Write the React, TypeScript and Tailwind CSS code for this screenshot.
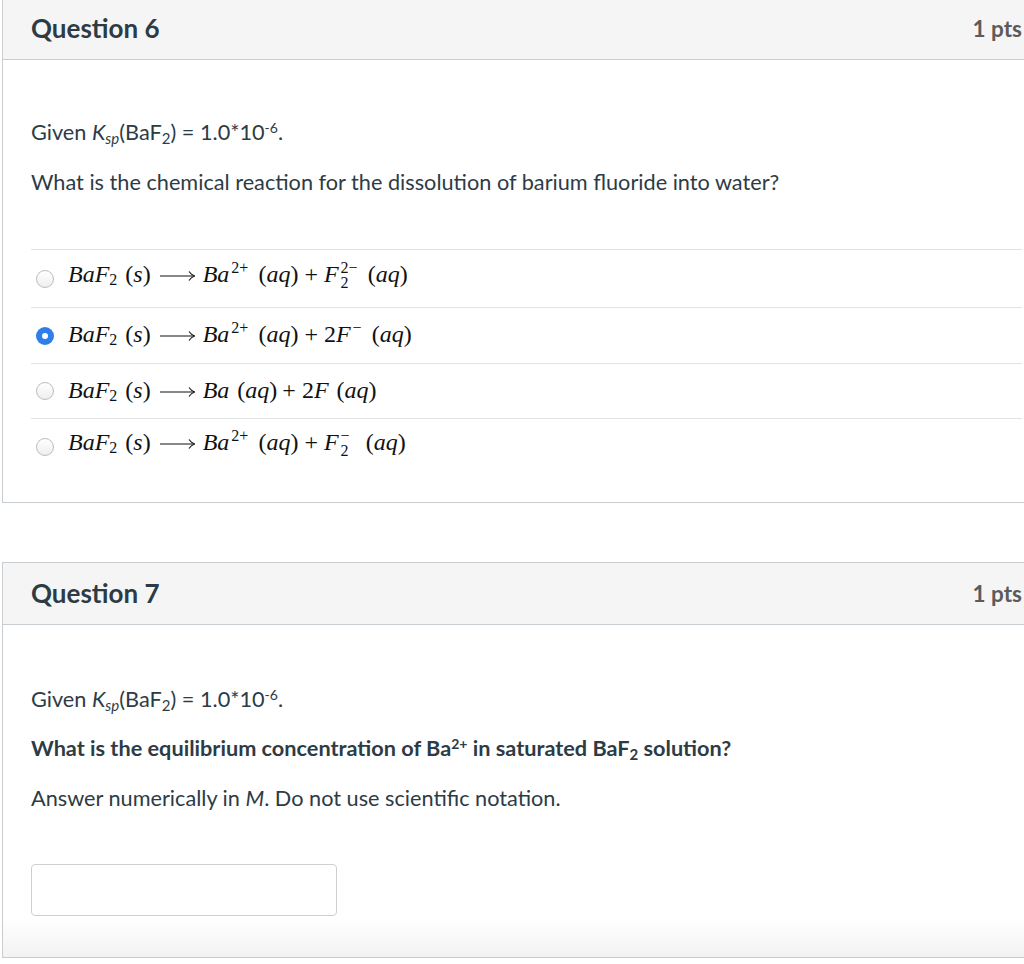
import { ReactNode } from 'react';

// quiz page: two question cards, one multiple choice and one numeric answer

const sans = "font-['Lato','Noto_Sans',sans-serif]";
const serif = "font-['Liberation_Serif','DejaVu_Serif',serif]";

function Radio({ checked }: { checked?: boolean }) {
	if (checked) {
		return (
			<span className="flex h-[18px] w-[18px] shrink-0 items-center justify-center rounded-full bg-[#2f7fe9]">
				<span className="h-[6px] w-[6px] rounded-full bg-white" />
			</span>
		);
	}
	return <span className="h-[18px] w-[18px] shrink-0 rounded-full border border-[#bdbdbd] bg-gradient-to-b from-white to-[#eeeeee]" />;
}

// long right arrow, as typeset math draws it
function Arrow({ className }: { className?: string }) {
	return (
		<svg width="35" height="12" viewBox="0 0 35 12" className={`inline-block align-middle ${className ?? ''}`}>
			<path d="M0 6H34" stroke="#111" strokeWidth="1.1" fill="none" />
			<path d="M29 1.5C30.5 3.8 32.2 5.2 35 6C32.2 6.8 30.5 8.2 29 10.5" stroke="#111" strokeWidth="1.1" fill="none" />
		</svg>
	);
}

const Sup = ({ children, className }: { children: ReactNode; className?: string }) => (
	<span className={`relative -top-[9px] text-[16px] ${className ?? ''}`}>{children}</span>
);
const Stack = ({ sup, className }: { sup: ReactNode; className?: string }) => (
	<span className={`relative -top-[9px] inline-flex flex-col text-[16px] leading-[15px] ${className ?? ''}`}>
		<span>{sup}</span>
		<span>2</span>
	</span>
);

function Lhs() {
	return (
		<>
			<i>BaF</i>
			<span className="relative top-[3px] text-[16px]">2</span>
			<span className="ml-[8px]">
				(<i>s</i>)
			</span>
			<Arrow className="ml-[9px]" />
			<i className="ml-[8px]">Ba</i>
		</>
	);
}

const Aq = ({ className }: { className?: string }) => (
	<span className={className}>
		(<i>aq</i>)
	</span>
);

const answers: { checked?: boolean; rhs: ReactNode; h: string }[] = [
	{
		h: 'h-[58px]',
		rhs: (
			<>
				<Sup className="ml-[2px]">2+</Sup>
				<Aq className="ml-[10px]" />
				<span className="ml-[6px]">+</span>
				<i className="ml-[6px]">F</i>
				<Stack sup="2−" className="ml-[2px]" />
				<Aq className="ml-[10px]" />
			</>
		),
	},
	{
		checked: true,
		h: 'h-[56px]',
		rhs: (
			<>
				<Sup className="ml-[2px]">2+</Sup>
				<Aq className="ml-[10px]" />
				<span className="ml-[6px]">+</span>
				<span className="ml-[6px]">
					2<i>F</i>
				</span>
				<Sup className="ml-[2px]">−</Sup>
				<Aq className="ml-[10px]" />
			</>
		),
	},
	{
		h: 'h-[55px]',
		rhs: (
			<>
				<Aq className="ml-[8px]" />
				<span className="ml-[5px]">+</span>
				<span className="ml-[6px]">
					2<i>F</i>
				</span>
				<Aq className="ml-[8px]" />
			</>
		),
	},
	{
		h: 'h-[56px]',
		rhs: (
			<>
				<Sup className="ml-[2px]">2+</Sup>
				<Aq className="ml-[10px]" />
				<span className="ml-[6px]">+</span>
				<i className="ml-[6px]">F</i>
				<Stack sup="−" className="ml-[2px]" />
				<Aq className="ml-[16px]" />
			</>
		),
	},
];

function Ksp() {
	return (
		<p className="leading-[28px]">
			Given <i>K</i>
			<sub className="text-[15px] italic">sp</sub>(BaF<sub className="text-[15px]">2</sub>) = 1.0*10
			<sup className="text-[14px]">-6</sup>.
		</p>
	);
}

function Card({ title, children, className }: { title: string; children: ReactNode; className?: string }) {
	return (
		<div className={`w-[1049px] border border-[#c7cdd1] ${className ?? ''}`}>
			<div className="flex h-[62px] items-center justify-between border-b border-[#c7cdd1] bg-[#f5f5f5] px-[28px]">
				<h2 className="text-[26px] font-bold text-[#2d3b45]">{title}</h2>
				<span className="text-[22.5px] font-bold text-[#5b5b5b]">1 pts</span>
			</div>
			{children}
		</div>
	);
}

export default function App() {
	return (
		<div className={`h-[964px] w-[1024px] overflow-hidden bg-white pl-[2px] text-[21.7px] text-[#2d3b45] ${sans}`}>
			<Card title="Question 6" className="-mt-[3px]">
				<div className="px-[28px] pb-[28px] pt-[58px]">
					<Ksp />
					<p className="mt-[22px] leading-[28px]">
						What is the chemical reaction for the dissolution of barium fluoride into water?
					</p>
					<ul className="mt-[53px]">
						{answers.map((a, i) => (
							<li key={i} className={`flex items-center gap-[14px] border-t border-[#e3e3e3] pl-[5px] ${a.h}`}>
								<Radio checked={a.checked} />
								<span className={`whitespace-nowrap text-[24px] leading-[30px] text-[#111] ${serif}`}>
									<Lhs />
									{a.rhs}
								</span>
							</li>
						))}
					</ul>
				</div>
			</Card>

			<Card title="Question 7" className="mt-[59px]">
				<div className="bg-[linear-gradient(to_bottom,#ffffff_88%,#f2f2f2)] px-[28px] pb-[41px] pt-[60px]">
					<Ksp />
					<p className="mt-[21px] font-bold leading-[28px]">
						What is the equilibrium concentration of Ba<sup className="text-[14px]">2+</sup> in saturated BaF
						<sub className="text-[15px]">2</sub> solution?
					</p>
					<p className="mt-[22px] leading-[28px]">
						Answer numerically in <i>M</i>. Do not use scientific notation.
					</p>
					<input
						type="text"
						className="mt-[52px] block h-[52px] w-[306px] rounded-[4px] border border-[#cfcfcf] bg-white px-3 outline-none"
					/>
				</div>
			</Card>
		</div>
	);
}
